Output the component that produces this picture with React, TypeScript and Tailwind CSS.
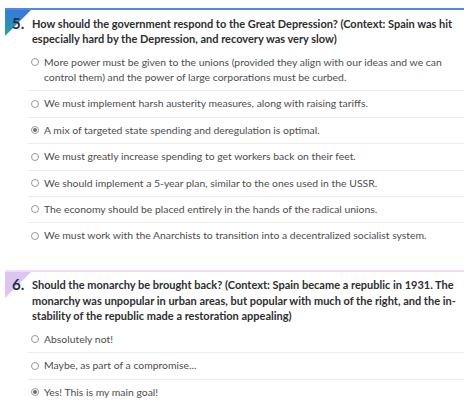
import React from 'react';

type Question = {
    num: number;
    title: string;
    options: string[];
    selected: number;
    accent: 'blue' | 'purple';
};

const questions: Question[] = [
    {
        num: 5,
        title: 'How should the government respond to the Great Depression? (Context: Spain was hit especially hard by the Depression, and recovery was very slow)',
        options: [
            'More power must be given to the unions (provided they align with our ideas and we can control them) and the power of large corporations must be curbed.',
            'We must implement harsh austerity measures, along with raising tariffs.',
            'A mix of targeted state spending and deregulation is optimal.',
            'We must greatly increase spending to get workers back on their feet.',
            'We should implement a 5-year plan, similar to the ones used in the USSR.',
            'The economy should be placed entirely in the hands of the radical unions.',
            'We must work with the Anarchists to transition into a decentralized socialist system.',
        ],
        selected: 2,
        accent: 'blue',
    },
    {
        num: 6,
        title: 'Should the monarchy be brought back? (Context: Spain became a republic in 1931. The monarchy was unpopular in urban areas, but popular with much of the right, and the in-stability of the republic made a restoration appealing)',
        options: ['Absolutely not!', 'Maybe, as part of a compromise...', 'Yes! This is my main goal!'],
        selected: 2,
        accent: 'purple',
    },
];

const Corner = ({ accent, id }: { accent: 'blue' | 'purple'; id: string }) => (
    <svg className="absolute left-0 top-0" width="26" height="26" viewBox="0 0 26 26">
        <defs>
            <linearGradient id={id} x1="0" y1="1" x2="0.6" y2="0">
                {accent === 'blue' ? (
                    <>
                        <stop offset="0" stopColor="#27a88a" />
                        <stop offset="0.55" stopColor="#2f86c8" />
                        <stop offset="1" stopColor="#3a78dc" />
                    </>
                ) : (
                    <>
                        <stop offset="0" stopColor="#dcc4f3" />
                        <stop offset="1" stopColor="#dcc4f3" />
                    </>
                )}
            </linearGradient>
        </defs>
        <polygon points="0,0 26,0 0,26" fill={`url(#${id})`} />
    </svg>
);

const Radio = ({ checked }: { checked: boolean }) => (
    <span className="mt-[3.5px] flex h-[8px] w-[8px] shrink-0 items-center justify-center rounded-full border border-[#9a9a9a] bg-white">
        {checked && <span className="h-[4px] w-[4px] rounded-full bg-[#6e6e6e]" />}
    </span>
);

const QuestionCard = ({ q }: { q: Question }) => (
    <div
        className={`relative w-[459px] bg-white border-t-2 ${q.accent === 'blue' ? 'border-[#4e8ade]' : 'border-[#eedff8]'}`}
    >
        <Corner accent={q.accent} id={`corner-${q.num}`} />
        <div className="relative flex pt-[5.5px]">
            <div className="w-[27px] shrink-0 pl-[7px] text-[15px] font-bold leading-[15.5px] text-[#22303c]">
                {q.num}.
            </div>
            <div className="pr-[3px] text-[11px] font-bold leading-[15.5px] text-[#2e2e2e]">{q.title}</div>
        </div>
        <ul className="ml-[23px] mt-[3px]">
            {q.options.map((opt, i) => (
                <li
                    key={i}
                    className={`flex gap-[5px] pl-[3px] py-[5px] text-[10.4px] leading-[15.4px] text-[#4d4d4d] ${i < q.options.length - 1 ? 'border-b border-[#ececec]' : ''}`}
                >
                    <Radio checked={i === q.selected} />
                    <span>{opt}</span>
                </li>
            ))}
        </ul>
    </div>
);

export default function App() {
    return (
        <div className="min-h-screen bg-white pl-[5px] pt-[8px] font-['Lato',sans-serif]">
            <div className="flex flex-col gap-[21px]">
                {questions.map(q => (
                    <QuestionCard key={q.num} q={q} />
                ))}
            </div>
        </div>
    );
}
